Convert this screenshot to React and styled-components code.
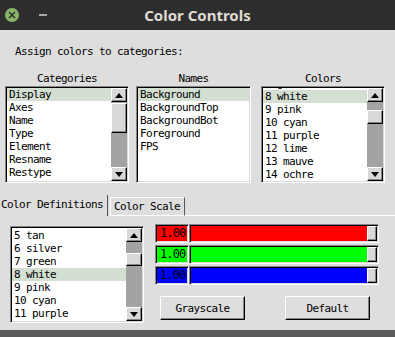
import React from "react";
import styled, { createGlobalStyle, css } from "styled-components";

const mono = `"DejaVu Sans Mono", "Liberation Mono", monospace`;

const GlobalStyle = createGlobalStyle`
  html, body {
    margin: 0;
    padding: 0;
    background: #dedede;
  }
  body {
    width: 395px;
    height: 337px;
    overflow: hidden;
    font-family: ${mono};
  }
`;

const sunken = css`
  border: 1px solid;
  border-color: #858585 #fff #fff #858585;
  box-shadow: inset 1px 1px 0 #000, inset -1px -1px 0 #d9d9d9;
`;

const raised = css`
  border: 1px solid;
  border-color: #fff #000 #000 #fff;
  box-shadow: inset -1px -1px 0 #858585;
`;

const fixedText = css`
  font-family: ${mono};
  font-size: 11px;
  letter-spacing: -0.62px;
  line-height: 13px;
  color: #000;
  white-space: nowrap;
`;

const Window = styled.div`
  width: 395px;
  height: 337px;
  display: flex;
  flex-direction: column;
  background: #dedede;
`;

const TitleBar = styled.div`
  height: 30px;
  flex-shrink: 0;
  background: #2e2e2e;
  display: flex;
  align-items: center;
  position: relative;
`;

const CloseBtn = styled.div`
  width: 14px;
  height: 14px;
  margin-left: 5px;
  border-radius: 50%;
  background: #8cb56c;
  display: flex;
  align-items: center;
  justify-content: center;
  svg { display: block; }
`;

const MinBtn = styled.div`
  width: 8px;
  height: 2px;
  margin-left: 20px;
  background: #a8a8a8;
`;

const Title = styled.div`
  position: absolute;
  left: 0;
  right: 0;
  text-align: center;
  font-family: "Noto Sans", "DejaVu Sans", sans-serif;
  font-weight: 700;
  font-size: 15px;
  color: #dfdbd2;
  pointer-events: none;
`;

const Body = styled.div`
  flex: 1;
  display: flex;
  flex-direction: column;
`;

const Prompt = styled.div`
  ${fixedText};
  margin: 15px 0 0 15px;
`;

const Columns = styled.div`
  display: flex;
  margin-top: 14px;
  padding-left: 5px;
`;

const Column = styled.div`
  width: ${p => p.$w}px;
  margin-left: ${p => p.$ml || 0}px;
  display: flex;
  flex-direction: column;
`;

const ColLabel = styled.div`
  ${fixedText};
  text-align: center;
  margin-bottom: 1px;
`;

const ListBox = styled.div`
  ${sunken};
  box-sizing: border-box;
  width: ${p => p.$w}px;
  height: 97px;
  background: #fff;
  display: flex;
  padding: 1px;
  overflow: hidden;
`;

const Rows = styled.div`
  flex: 1;
  overflow: hidden;
`;

const RowsInner = styled.div`
  margin-top: ${p => -p.$offset}px;
`;

const Row = styled.div`
  ${fixedText};
  height: 13px;
  padding-left: ${p => p.$pad}px;
  background: ${p => (p.$sel ? "#d3dfd1" : "transparent")};
`;

const ScrollBar = styled.div`
  width: 16px;
  flex-shrink: 0;
  display: flex;
  flex-direction: column;
  background: #a3a3a3;
`;

const Arrow = styled.div`
  ${raised};
  box-sizing: border-box;
  height: 14px;
  background: #d9d9d9;
  display: flex;
  align-items: center;
  justify-content: center;

  &::after {
    content: "";
    border-left: 4px solid transparent;
    border-right: 4px solid transparent;
    ${p =>
      p.$down
        ? "border-top: 5px solid #000;"
        : "border-bottom: 5px solid #000;"}
  }
`;

const Trough = styled.div`
  flex: 1;
  display: flex;
  flex-direction: column;
`;

const Thumb = styled.div`
  ${raised};
  box-sizing: border-box;
  margin-top: ${p => p.$top}px;
  height: ${p => p.$h}px;
  background: #d9d9d9;
`;

const TabBar = styled.div`
  display: flex;
  align-items: flex-end;
  height: 21px;
  margin-top: 12px;
`;

const Tab = styled.div`
  ${fixedText};
  box-sizing: border-box;
  display: flex;
  align-items: center;
  border-right: 1px solid #555;
  ${p =>
    p.$active
      ? css`
          height: 21px;
          padding: 0 4px 2px 1px;
        `
      : css`
          height: 19px;
          margin-left: 2px;
          padding: 0 4px 1px 3px;
          border-top: 1px solid #fff;
          border-left: 1px solid #fff;
          border-bottom: 1px solid #fff;
        `}
`;

const TabFill = styled.div`
  flex: 1;
  border-bottom: 1px solid #fff;
`;

const Panel = styled.div`
  height: 114px;
  display: flex;
  align-items: flex-start;
  padding: 8px 0 0 10px;
  box-sizing: border-box;
`;

const DefList = styled(ListBox)`
  margin-top: 2px;
`;

const Mixer = styled.div`
  margin-left: 11px;
  width: 224px;
  display: flex;
  flex-direction: column;
`;

const Channel = styled.div`
  display: flex;
  height: 19px;
  margin-bottom: 2px;
`;

const Entry = styled.div`
  ${sunken};
  ${fixedText};
  font-size: 12px;
  letter-spacing: -0.9px;
  box-sizing: border-box;
  width: 34px;
  height: 19px;
  line-height: 17px;
  padding-left: 4px;
  background: ${p => p.$c};
`;

const Scale = styled.div`
  ${sunken};
  box-sizing: border-box;
  width: 190px;
  height: 19px;
  background: ${p => p.$c};
  display: flex;
  justify-content: flex-end;
  padding: 1px;
`;

const Slider = styled.div`
  ${raised};
  box-sizing: border-box;
  width: 10px;
  height: 100%;
  background: #d9d9d9;
`;

const ButtonRow = styled.div`
  display: flex;
  justify-content: space-between;
  padding: 9px 9px 0 5px;
`;

const Button = styled.div`
  ${raised};
  ${fixedText};
  box-sizing: border-box;
  width: 85px;
  height: 24px;
  background: #dedede;
  display: flex;
  align-items: center;
  justify-content: center;
`;

const BottomEdge = styled.div`
  height: 7px;
  flex-shrink: 0;
  background: #5a5a5a;
`;

function List({ w, items, sel, offset = 0, pad = 2, thumb }) {
  return (
    <ListBox $w={w}>
      <Rows>
        <RowsInner $offset={offset}>
          {items.map(it => (
            <Row key={it} $sel={it === sel} $pad={pad}>
              {it}
            </Row>
          ))}
        </RowsInner>
      </Rows>
      {thumb && (
        <ScrollBar>
          <Arrow />
          <Trough>
            <Thumb $top={thumb[0]} $h={thumb[1]} />
          </Trough>
          <Arrow $down />
        </ScrollBar>
      )}
    </ListBox>
  );
}

const categories = ["Display", "Axes", "Name", "Type", "Element", "Resname", "Restype", "Chain"];
const names = ["Background", "BackgroundTop", "BackgroundBot", "Foreground", "FPS"];
const colors = ["7 green", "8 white", "9 pink", "10 cyan", "11 purple", "12 lime", "13 mauve", "14 ochre", "15 iceblue"];
const defs = ["4 yellow", "5 tan", "6 silver", "7 green", "8 white", "9 pink", "10 cyan", "11 purple", "12 lime"];
const channels = ["#ff0000", "#00ff00", "#0000ff"];

export default function App() {
  return (
    <Window>
      <GlobalStyle />
      <TitleBar>
        <CloseBtn>
          <svg width="8" height="8" viewBox="0 0 8 8">
            <path d="M1 1L7 7M7 1L1 7" stroke="#2c3626" strokeWidth="1.6" />
          </svg>
        </CloseBtn>
        <MinBtn />
        <Title>Color Controls</Title>
      </TitleBar>
      <Body>
        <Prompt>Assign colors to categories:</Prompt>
        <Columns>
          <Column $w={124}>
            <ColLabel>Categories</ColLabel>
            <List w={124} items={categories} sel="Display" thumb={[1, 30]} />
          </Column>
          <Column $w={115} $ml={7}>
            <ColLabel>Names</ColLabel>
            <List w={115} items={names} sel="Background" />
          </Column>
          <Column $w={124} $ml={10}>
            <ColLabel>Colors</ColLabel>
            <List w={124} items={colors} sel="8 white" offset={11} thumb={[8, 14]} />
          </Column>
        </Columns>
        <TabBar>
          <Tab $active>Color Definitions</Tab>
          <Tab>Color Scale</Tab>
          <TabFill />
        </TabBar>
        <Panel>
          <DefList $w={134}>
            <Rows>
              <RowsInner $offset={12}>
                {defs.map(it => (
                  <Row key={it} $sel={it === "8 white"} $pad={2}>
                    {it}
                  </Row>
                ))}
              </RowsInner>
            </Rows>
            <ScrollBar>
              <Arrow />
              <Trough>
                <Thumb $top={11} $h={13} />
              </Trough>
              <Arrow $down />
            </ScrollBar>
          </DefList>
          <Mixer>
            {channels.map(c => (
              <Channel key={c}>
                <Entry $c={c}>1.00</Entry>
                <Scale $c={c}>
                  <Slider />
                </Scale>
              </Channel>
            ))}
            <ButtonRow>
              <Button>Grayscale</Button>
              <Button>Default</Button>
            </ButtonRow>
          </Mixer>
        </Panel>
      </Body>
      <BottomEdge />
    </Window>
  );
}
